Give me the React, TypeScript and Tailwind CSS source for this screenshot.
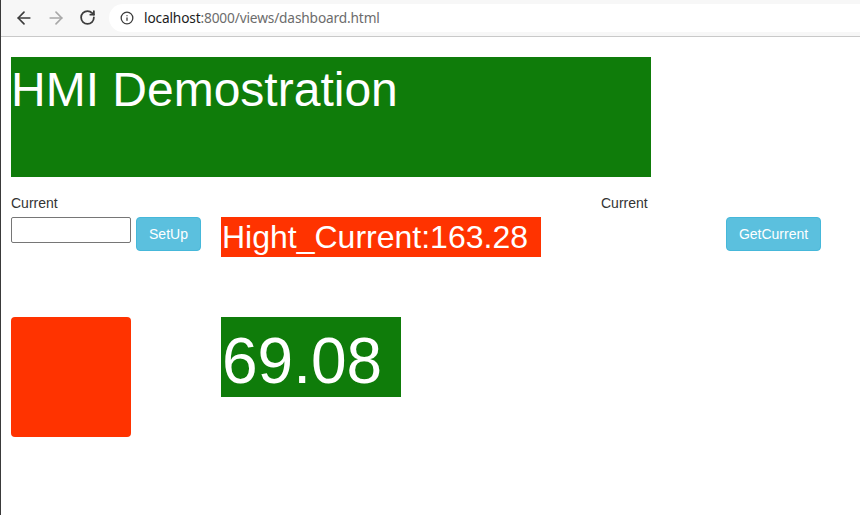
import { ArrowLeft, ArrowRight, RotateCw, Info } from 'lucide-react'

function BrowserBar() {
  return (
    <div className="flex h-[37px] shrink-0 items-center border-b border-[#c9c9c9] bg-[#f7f7f7] pb-[1px]">
      <div className="flex w-[108px] items-center">
        <ArrowLeft className="ml-[13px] h-[20px] w-[20px] text-[#3c3c3c]" strokeWidth={2} />
        <ArrowRight className="ml-[12px] h-[20px] w-[20px] text-[#a8a8a8]" strokeWidth={2} />
        <RotateCw className="ml-[13px] h-[17px] w-[17px] text-[#3c3c3c]" strokeWidth={2.5} />
      </div>
      <div className="flex h-[28px] flex-1 items-center rounded-l-full bg-white pl-[11px]">
        <Info className="h-[14px] w-[14px] text-[#3c3c3c]" strokeWidth={2.2} />
        <span className="ml-[10px] font-['Noto_Sans',sans-serif] text-[13.7px] leading-none tracking-[-0.15px] text-[#6c6c6c]">
          <span className="text-[#1c1c1c]">localhost</span>:8000/views/dashboard.html
        </span>
      </div>
    </div>
  )
}

export default function App() {
  return (
    <div className="flex h-[515px] w-[860px] flex-col overflow-hidden border-l border-[#3a3a3a] bg-white font-['Liberation_Sans',Arial,sans-serif] text-[#333]">
      <BrowserBar />

      <div className="flex flex-col pl-[10px]">
        {/* Title */}
        <div className="mt-[20px] h-[120px] w-[640px] bg-[#0f7c0a] pt-[9px]">
          <h1 className="text-[48px] leading-[48px] text-white">HMI Demostration</h1>
        </div>

        {/* Labels */}
        <div className="mt-[16px] flex text-[14px] leading-[20px]">
          <span className="w-[590px]">Current</span>
          <span>Current</span>
        </div>

        {/* Controls */}
        <div className="mt-[4px] flex items-start">
          <input
            type="text"
            className="h-[26px] w-[120px] rounded-[2px] border border-[#767676] bg-white px-1 text-[14px] outline-none"
          />
          <button className="ml-[5px] h-[34px] w-[65px] rounded-[4px] border border-[#46b8da] bg-[#5bc0de] text-[14px] text-white">
            SetUp
          </button>
          <div className="ml-[20px] h-[40px] w-[320px] bg-[#ff3300] pl-[1px] text-[32px] leading-[40px] text-white">
            Hight_Current:163.28
          </div>
          <button className="ml-[185px] h-[34px] w-[95px] rounded-[4px] border border-[#46b8da] bg-[#5bc0de] text-[14px] text-white">
            GetCurrent
          </button>
        </div>

        {/* Indicators */}
        <div className="mt-[60px] flex items-start">
          <div className="h-[120px] w-[120px] rounded-[4px] bg-[#ff3300]" />
          <div className="ml-[90px] h-[80px] w-[180px] bg-[#0f7c0a] pl-[1px] pt-[12px] text-[64px] leading-[64px] text-white">
            69.08
          </div>
        </div>
      </div>
    </div>
  )
}
